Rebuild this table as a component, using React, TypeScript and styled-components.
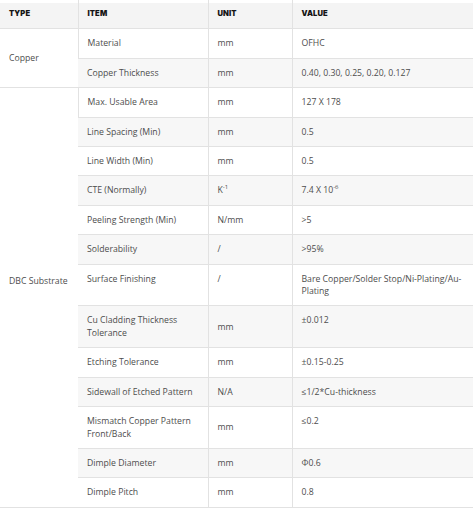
import React from "react";
import styled, { createGlobalStyle } from "styled-components";

const Global = createGlobalStyle`
  html, body { margin: 0; padding: 0; background: #fff; }
  body { font-family: "Open Sans", "Liberation Sans", sans-serif; }
  sup { font-size: 6px; line-height: 0; vertical-align: 4px; }
`;

const Table = styled.table`
  width: 473px;
  border-collapse: collapse;
  table-layout: fixed;
  font-family: "Open Sans", "Liberation Sans", sans-serif;
  font-size: 8.7px;
  line-height: 12.4px;
  color: #4d4d4d;
`;

const Th = styled.th`
  text-align: left;
  padding: 8px 9px 8px 9px;
  font-family: Inter, "Liberation Sans", sans-serif;
  font-weight: 900;
  font-size: 7.6px;
  letter-spacing: 0.1px;
  color: #151515;
  background: linear-gradient(#ffffff 0 3px, #f4f4f4 3px);
  border-bottom: 1px solid #e2e2e2;
  border-left: 1px solid #e2e2e2;
  &:first-child { border-left: none; }
`;

const Row = styled.tr`
  &:nth-child(even) { background: #f7f7f7; }
`;

const Td = styled.td<{ $valign?: "top" | "middle"; $padBottom?: number }>`
  vertical-align: ${(p) => p.$valign ?? "top"};
  padding: 8px 9px ${(p) => p.$padBottom ?? 8}px 9px;
  border-bottom: 1px solid #e2e2e2;
  border-left: 1px solid #e2e2e2;
  &:first-child { border-left: none; }
`;

const TypeCell = styled(Td)`
  background: #fff;
  white-space: nowrap;
  padding-right: 2px;
`;

type Item = {
  item: string;
  unit: React.ReactNode;
  value: React.ReactNode;
  unitMiddle?: boolean;
};

const copper: Item[] = [
  { item: "Material", unit: "mm", value: "OFHC" },
  { item: "Copper Thickness", unit: "mm", value: "0.40, 0.30, 0.25, 0.20, 0.127" },
];

const dbc: Item[] = [
  { item: "Max. Usable Area", unit: "mm", value: "127 X 178" },
  { item: "Line Spacing (Min)", unit: "mm", value: "0.5" },
  { item: "Line Width (Min)", unit: "mm", value: "0.5" },
  {
    item: "CTE (Normally)",
    unit: (
      <>
        K<sup>-1</sup>
      </>
    ),
    value: (
      <>
        7.4 X 10<sup>-6</sup>
      </>
    ),
  },
  { item: "Peeling Strength (Min)", unit: "N/mm", value: ">5" },
  { item: "Solderability", unit: "/", value: ">95%" },
  { item: "Surface Finishing", unit: "/", value: "Bare Copper/Solder Stop/Ni-Plating/Au-Plating" },
  { item: "Cu Cladding Thickness Tolerance", unit: "mm", value: "±0.012", unitMiddle: true },
  { item: "Etching Tolerance", unit: "mm", value: "±0.15-0.25" },
  { item: "Sidewall of Etched Pattern", unit: "N/A", value: "≤1/2*Cu-thickness" },
  { item: "Mismatch Copper Pattern Front/Back", unit: "mm", value: "≤0.2", unitMiddle: true },
  { item: "Dimple Diameter", unit: "mm", value: "Φ0.6" },
  { item: "Dimple Pitch", unit: "mm", value: "0.8" },
];

const Group: React.FC<{ type: string; items: Item[]; padBottom?: number }> = ({ type, items, padBottom }) => (
  <>
    {items.map((it, i) => (
      <Row key={it.item}>
        {i === 0 && (
          <TypeCell rowSpan={items.length} $valign="middle" $padBottom={padBottom}>
            {type}
          </TypeCell>
        )}
        <Td>{it.item}</Td>
        <Td $valign={it.unitMiddle ? "middle" : "top"}>{it.unit}</Td>
        <Td>{it.value}</Td>
      </Row>
    ))}
  </>
);

export default function App() {
  return (
    <>
      <Global />
      <Table>
        <colgroup>
          <col style={{ width: 78 }} />
          <col style={{ width: 130 }} />
          <col style={{ width: 84 }} />
          <col />
        </colgroup>
        <thead>
          <tr>
            <Th>TYPE</Th>
            <Th>ITEM</Th>
            <Th>UNIT</Th>
            <Th>VALUE</Th>
          </tr>
        </thead>
        <tbody>
          <Group type="Copper" items={copper} />
          <Group type="DBC Substrate" items={dbc} padBottom={40} />
        </tbody>
      </Table>
    </>
  );
}
